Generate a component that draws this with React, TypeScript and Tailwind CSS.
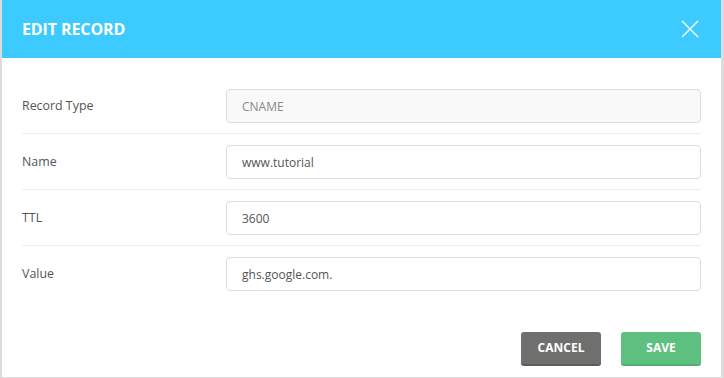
const FIELDS = [
  { label: "Record Type", value: "CNAME", disabled: true },
  { label: "Name", value: "www.tutorial" },
  { label: "TTL", value: "3600" },
  { label: "Value", value: "ghs.google.com." },
];

export default function App() {
  return (
    <div className="w-[724px] h-[378px] bg-[#dcdcdc] pl-[2px] font-['Open_Sans',sans-serif]">
      <div className="w-[719px] h-[377px] bg-white flex flex-col">
        {/* Header */}
        <div className="h-[58px] bg-[#3dcaff] flex items-center justify-between pl-5 pr-[22px]">
          <h2 className="text-white text-[16px] font-bold tracking-[-0.1px]">EDIT RECORD</h2>
          <svg width="18" height="18" viewBox="0 0 18 18" fill="none" stroke="white" strokeWidth="1.4">
            <path d="M1 1 L17 17 M17 1 L1 17" />
          </svg>
        </div>

        {/* Body */}
        <div className="px-5 pt-5">
          {FIELDS.map((f, i) => (
            <div
              key={f.label}
              className={`flex items-center pt-[11px] pb-[10px] ${i < FIELDS.length - 1 ? "border-b border-[#ececec]" : ""}`}
            >
              <label className="w-[204px] text-[12.4px] text-[#555]">{f.label}</label>
              <input
                readOnly
                value={f.value}
                className={`flex-1 h-[34px] rounded-[4px] border border-[#dddddd] px-[15px] text-[12px] outline-none ${
                  f.disabled ? "bg-[#f9f9f9] text-[#888]" : "bg-white text-[#555]"
                }`}
              />
            </div>
          ))}
        </div>

        {/* Footer */}
        <div className="flex justify-end gap-5 px-5 pt-[31px]">
          <button className="w-[80px] h-[34px] rounded-[3px] bg-[#6f706e] border-b-2 border-[#5c5d5b] text-white text-[12px] font-bold">
            CANCEL
          </button>
          <button className="w-[80px] h-[34px] rounded-[3px] bg-[#5ec080] border-b-2 border-[#52ae71] text-white text-[12px] font-bold">
            SAVE
          </button>
        </div>
      </div>
    </div>
  );
}
